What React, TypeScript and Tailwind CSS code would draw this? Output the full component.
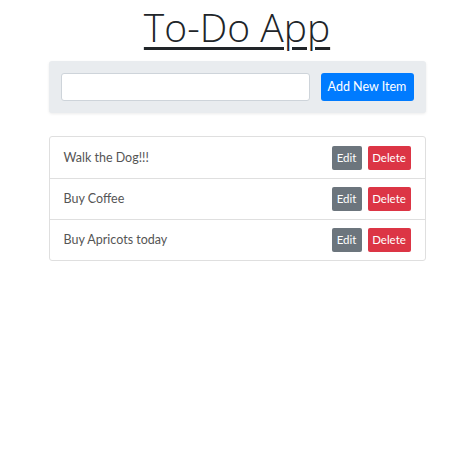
import { useState } from "react"

const FONT = "font-['Lato','Liberation_Sans',sans-serif]"

export default function App() {
  const [items] = useState(["Walk the Dog!!!", "Buy Coffee", "Buy Apricots today"])
  const [text, setText] = useState("")

  return (
    <div className={`${FONT} min-h-screen bg-white text-[#212529]`}>
      <div className="mx-auto w-[377px] pt-[4px]">
        <h1 className="text-center font-['Open_Sans',sans-serif] text-[39px] leading-[46px] font-light underline decoration-[3px] underline-offset-[5px]">
          To-Do App
        </h1>

        {/* Input panel */}
        <div className="mt-[11px] flex items-center gap-[11px] rounded-[3px] bg-[#e9ecef] px-[12px] py-[12px] shadow-[0_1px_3px_rgba(0,0,0,0.08)]">
          <input
            value={text}
            onChange={(e) => setText(e.target.value)}
            className="h-[28px] flex-1 rounded-[3px] border border-[#ced4da] bg-white px-2 text-[13px] outline-none"
          />
          <button className="h-[28px] w-[93px] rounded-[3px] bg-[#007bff] text-[12.5px] text-white">
            Add New Item
          </button>
        </div>

        {/* List */}
        <ul className="mt-[23px] rounded-[3px] border border-[#dfdfdf]">
          {items.map((item, i) => (
            <li
              key={item}
              className={`flex h-[41px] items-center justify-between px-[14px] ${
                i > 0 ? "border-t border-[#dfdfdf]" : ""
              }`}
            >
              <span className="pt-[1px] text-[12.5px] text-[#555]">{item}</span>
              <div className="flex gap-[6px]">
                <button className="h-[24px] w-[30px] rounded-[2px] bg-[#6c757d] text-[11.5px] text-white">
                  Edit
                </button>
                <button className="h-[24px] w-[43px] rounded-[2px] bg-[#dc3545] text-[11.5px] text-white">
                  Delete
                </button>
              </div>
            </li>
          ))}
        </ul>
      </div>
    </div>
  )
}
